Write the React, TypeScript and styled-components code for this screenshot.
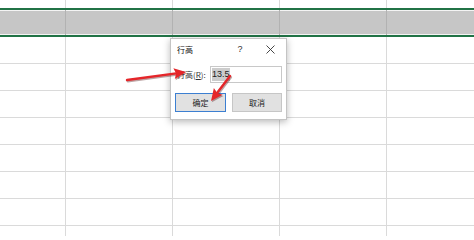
import React from "react";
import styled, { createGlobalStyle } from "styled-components";

const Global = createGlobalStyle`
  html, body { margin: 0; padding: 0; background: #fff; overflow: hidden; }
  body { font-family: "Noto Sans CJK SC", "Liberation Sans", sans-serif; }
`;

const Page = styled.div`
  position: relative;
  width: 474px;
  height: 236px;
  overflow: hidden;
  background: #fff;
`;

const Sheet = styled.div`
  display: flex;
  flex-direction: column;
`;

const Row = styled.div<{ $h: number; $selected?: boolean; $noLine?: boolean }>`
  display: grid;
  grid-template-columns: 66px repeat(4, 107px);
  height: ${(p) => p.$h}px;
  box-sizing: border-box;
  background: ${(p) => (p.$selected ? "#c6c6c6" : "#fff")};
  border-bottom: ${(p) => (p.$noLine ? "none" : "1px solid #dadada")};
  ${(p) =>
    p.$selected &&
    `
    border-top: 2px solid #217346;
    border-bottom: 2px solid #217346;
    box-shadow: inset 0 1px 0 #f4f4f4, inset 0 -1px 0 #f4f4f4;
  `}
`;

const Cell = styled.div<{ $selected?: boolean }>`
  border-right: 1px solid ${(p) => (p.$selected ? "#b2b2b2" : "#dadada")};
`;

const Dialog = styled.div`
  position: absolute;
  left: 170px;
  top: 38px;
  width: 117px;
  height: 82px;
  box-sizing: border-box;
  background: #fff;
  border: 1px solid #c4c4c4;
  box-shadow: 0 2px 7px rgba(0, 0, 0, 0.28);
  display: flex;
  flex-direction: column;
  font-size: 8px;
  color: #222;
`;

const TitleBar = styled.div`
  height: 21px;
  display: flex;
  align-items: center;
  padding-left: 6px;
  padding-right: 4px;
`;

const Title = styled.span`
  font-size: 8px;
  line-height: 1;
  color: #111;
`;

const HelpButton = styled.span`
  margin-left: auto;
  width: 24px;
  text-align: center;
  font-family: "Liberation Sans", sans-serif;
  color: #333;
  font-size: 9px;
  line-height: 1;
`;

const CloseButton = styled.span`
  margin-left: 6px;
  width: 24px;
  height: 21px;
  display: flex;
  align-items: center;
  justify-content: center;
`;

const Body = styled.div`
  display: flex;
  flex-direction: column;
  padding: 6px 4px 0 6px;
  gap: 10px;
`;

const FieldRow = styled.div`
  display: flex;
  align-items: center;
  justify-content: space-between;
`;

const Label = styled.span`
  font-size: 8px;
  white-space: nowrap;
  color: #333;
`;

const Input = styled.div`
  width: 72px;
  height: 17px;
  box-sizing: border-box;
  border: 1px solid #c8c8c8;
  display: flex;
  align-items: center;
  padding-left: 1px;
`;

const Selected = styled.span`
  background: #cccccc;
  font-family: "Liberation Sans", sans-serif;
  font-size: 9px;
  color: #222;
  padding: 1px 0;
  line-height: 11px;
`;

const Buttons = styled.div`
  display: flex;
  gap: 6px;
  margin-left: -2px;
`;

const Button = styled.div<{ $primary?: boolean; $w: number }>`
  width: ${(p) => p.$w}px;
  height: 19px;
  box-sizing: border-box;
  background: #e1e1e1;
  border: ${(p) => (p.$primary ? "1.5px solid #3c7fd1" : "1px solid #c6c6c6")};
  display: flex;
  align-items: center;
  justify-content: center;
  font-size: 8px;
  color: #222;
`;

const Arrows = styled.svg`
  position: absolute;
  left: 0;
  top: 0;
  pointer-events: none;
`;

const cols = [0, 1, 2, 3, 4];

function SheetRow({ h, selected, noLine }: { h: number; selected?: boolean; noLine?: boolean }) {
  return (
    <Row $h={h} $selected={selected} $noLine={noLine}>
      {cols.map((c) => (
        <Cell key={c} $selected={selected} />
      ))}
    </Row>
  );
}

function Arrow({ x1, y1, x2, y2 }: { x1: number; y1: number; x2: number; y2: number }) {
  const dx = x2 - x1;
  const dy = y2 - y1;
  const len = Math.hypot(dx, dy);
  const ux = dx / len;
  const uy = dy / len;
  const hl = 12;
  const hw = 5.5;
  const bx = x2 - ux * hl;
  const by = y2 - uy * hl;
  const px = -uy;
  const py = ux;
  const pts = `${x2},${y2} ${bx + px * hw},${by + py * hw} ${bx + ux * 2},${by + uy * 2} ${bx - px * hw},${by - py * hw}`;
  return (
    <g>
      <g transform="translate(0.8,1.2)" opacity="0.35">
        <line x1={x1} y1={y1} x2={bx + ux * 2} y2={by + uy * 2} stroke="#400" strokeWidth="2.6" strokeLinecap="round" />
        <polygon points={pts} fill="#400" />
      </g>
      <line x1={x1} y1={y1} x2={bx + ux * 2} y2={by + uy * 2} stroke="#e5262a" strokeWidth="2.4" strokeLinecap="round" />
      <polygon points={pts} fill="#e5262a" />
    </g>
  );
}

export default function App() {
  return (
    <Page>
      <Global />
      <Sheet>
        <SheetRow h={8} noLine />
        <SheetRow h={29} selected />
        {Array.from({ length: 8 }).map((_, i) => (
          <SheetRow key={i} h={27} />
        ))}
      </Sheet>
      <Dialog>
        <TitleBar>
          <Title>行高</Title>
          <HelpButton>?</HelpButton>
          <CloseButton>
            <svg width="9" height="9" viewBox="0 0 9 9">
              <path d="M0.5 0.5 L8.5 8.5 M8.5 0.5 L0.5 8.5" stroke="#333" strokeWidth="0.9" fill="none" />
            </svg>
          </CloseButton>
        </TitleBar>
        <Body>
          <FieldRow>
            <Label>行高(<u>R</u>):</Label>
            <Input>
              <Selected>13.5</Selected>
            </Input>
          </FieldRow>
          <Buttons>
            <Button $primary $w={51}>确定</Button>
            <Button $w={50}>取消</Button>
          </Buttons>
        </Body>
      </Dialog>
      <Arrows width="474" height="236" viewBox="0 0 474 236">
        <Arrow x1={127} y1={80} x2={186} y2={72} />
        <Arrow x1={230} y1={76} x2={211} y2={101} />
      </Arrows>
    </Page>
  );
}
